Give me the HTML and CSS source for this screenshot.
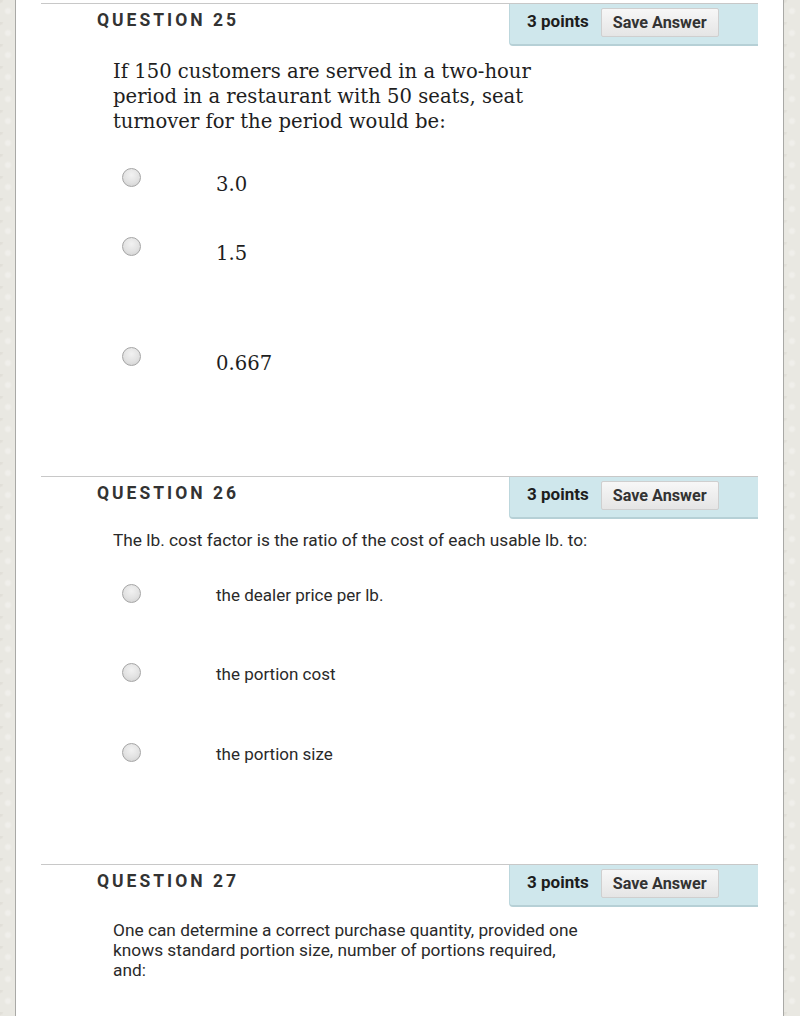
FILE: index.html
```html
<!DOCTYPE html>
<html lang="en">
<head>
<meta charset="utf-8">
<title>Test questions</title>
<link rel="stylesheet" href="styles.css">
</head>
<body>
<div class="page">
  <section class="question">
    <div class="q-header">
      <h2 class="q-title">QUESTION 25</h2>
      <div class="q-points">
        <span class="pts">3 points</span>
        <button class="save" type="button">Save Answer</button>
      </div>
    </div>
    <p class="q-text serif">If 150 customers are served in a two-hour<br>period in a restaurant with 50 seats, seat<br>turnover for the period would be:</p>
    <ul class="options serif-opts">
      <li class="opt"><span class="radio"></span><span class="label">3.0</span></li>
      <li class="opt"><span class="radio"></span><span class="label">1.5</span></li>
      <li class="opt opt-far"><span class="radio"></span><span class="label">0.667</span></li>
    </ul>
  </section>

  <section class="question">
    <div class="q-header">
      <h2 class="q-title">QUESTION 26</h2>
      <div class="q-points">
        <span class="pts">3 points</span>
        <button class="save" type="button">Save Answer</button>
      </div>
    </div>
    <p class="q-text sans">The lb. cost factor is the ratio of the cost of each usable lb. to:</p>
    <ul class="options sans-opts">
      <li class="opt"><span class="radio"></span><span class="label">the dealer price per lb.</span></li>
      <li class="opt"><span class="radio"></span><span class="label">the portion cost</span></li>
      <li class="opt"><span class="radio"></span><span class="label">the portion size</span></li>
    </ul>
  </section>

  <section class="question">
    <div class="q-header">
      <h2 class="q-title">QUESTION 27</h2>
      <div class="q-points">
        <span class="pts">3 points</span>
        <button class="save" type="button">Save Answer</button>
      </div>
    </div>
    <p class="q-text sans q-last">One can determine a correct purchase quantity, provided one<br>knows standard portion size, number of portions required,<br>and:</p>
  </section>
</div>
</body>
</html>
```

FILE: styles.css
```css
html, body {
  margin: 0;
  padding: 0;
  height: 100%;
}

body {
  background-color: #e9e8e2;
  background-image:
    radial-gradient(circle at 50% 50%, rgba(255,255,255,0.3) 0 2px, transparent 4px),
    radial-gradient(circle at 0 0, rgba(205,203,194,0.3) 0 2px, transparent 4px);
  background-size: 16px 22px;
  font-family: Roboto, "Liberation Sans", sans-serif;
  color: #222;
}

.page {
  box-sizing: border-box;
  min-height: 100%;
  margin: 0 16px 0 15px;
  padding: 3px 25px 0 25px;
  background: #fff;
  border-left: 1px solid #a9a9a6;
  border-right: 1px solid #a9a9a6;
  overflow: hidden;
}

.question {
  border-top: 1px solid #c8c8c8;
  margin-bottom: 100px;
}

.question:last-child {
  margin-bottom: 0;
}

.q-header {
  display: flex;
  justify-content: space-between;
  align-items: flex-start;
}

.q-title {
  margin: 0;
  padding: 6px 0 0 56px;
  font-size: 17.5px;
  line-height: 20px;
  font-weight: 700;
  letter-spacing: 3px;
  color: #333;
}

.q-points {
  box-sizing: border-box;
  width: 249px;
  height: 42px;
  display: flex;
  align-items: flex-start;
  padding: 4px 0 0 17px;
  background: #cfe7ec;
  border-left: 1px solid #bdd7dd;
  border-bottom: 2px solid #b6d0d6;
  border-bottom-left-radius: 4px;
}

.pts {
  font-size: 17px;
  font-weight: 700;
  line-height: 26px;
  color: #1d1d1d;
  margin-right: 12px;
}

.save {
  box-sizing: border-box;
  height: 29px;
  width: 118px;
  padding: 0;
  font-family: Roboto, "Liberation Sans", sans-serif;
  font-size: 16.2px;
  font-weight: 700;
  color: #333;
  background: linear-gradient(#f7f7f7, #e5e5e5);
  border: 1px solid #cfcfcf;
  border-radius: 2px;
}

.q-text {
  margin: 12px 0 0 72px;
  color: #1e1e1e;
}

.q-text.serif {
  font-family: "DejaVu Serif", "Liberation Serif", serif;
  font-size: 19.6px;
  line-height: 25px;
  margin-top: 12.5px;
}

.q-text.sans {
  font-family: Roboto, "Liberation Sans", sans-serif;
  font-size: 17.3px;
  line-height: 20px;
  margin-top: 11px;
  color: #2a2a2a;
}

.q-text.q-last {
  margin-top: 13px;
  padding-bottom: 20px;
}

.options {
  list-style: none;
  margin: 34px 0 0 81px;
  padding: 0;
}

.opt {
  display: flex;
  align-items: flex-start;
}

.radio {
  flex: none;
  box-sizing: border-box;
  width: 19px;
  height: 19px;
  border-radius: 50%;
  border: 1px solid #a5a5a5;
  background: radial-gradient(circle at 50% 35%, #f2f2f2 0, #e2e2e2 55%, #cdcdcd 100%);
}

.label {
  margin-left: 75px;
}

.serif-opts .opt + .opt { margin-top: 40px; }
.serif-opts .opt-far { margin-top: 81px !important; }
.serif-opts .label {
  font-family: "DejaVu Serif", "Liberation Serif", serif;
  font-size: 19.6px;
  line-height: 25px;
  margin-top: 4px;
  color: #1e1e1e;
}

.sans-opts .opt + .opt { margin-top: 58.5px; }
.sans-opts .label {
  font-family: Roboto, "Liberation Sans", sans-serif;
  font-size: 17px;
  line-height: 20px;
  margin-top: 1px;
  color: #2a2a2a;
}
```
